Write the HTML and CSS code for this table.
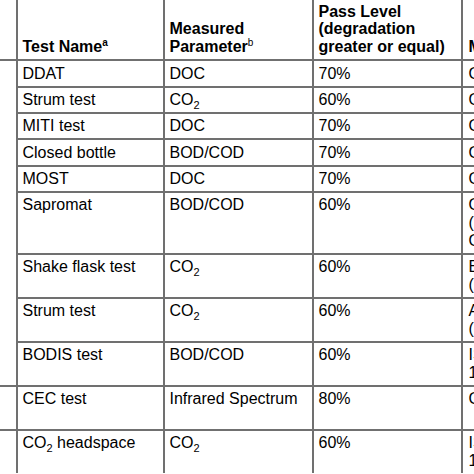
FILE: index.html
```html
<!DOCTYPE html>
<html>
<head>
<meta charset="utf-8">
<link rel="stylesheet" href="styles.css">
</head>
<body>
<div class="page">
  <div class="table">
    <div class="cell head"><div></div></div>
    <div class="cell head"><div>Test Name<sup class="sa">a</sup></div></div>
    <div class="cell head"><div>Measured<br>Parameter<sup class="sb">b</sup></div></div>
    <div class="cell head"><div>Pass Level<br>(degradation<br>greater or equal)</div></div>
    <div class="cell head last"><div>Method</div></div>

    <div class="cell group"></div>
    <div class="cell">DDAT</div>
    <div class="cell">DOC</div>
    <div class="cell">70%</div>
    <div class="cell last">OECD 301A</div>

    <div class="cell">Strum test</div>
    <div class="cell">CO<sub>2</sub></div>
    <div class="cell">60%</div>
    <div class="cell last">OECD 301B</div>

    <div class="cell">MITI test</div>
    <div class="cell">DOC</div>
    <div class="cell">70%</div>
    <div class="cell last">OECD 301C</div>

    <div class="cell">Closed bottle</div>
    <div class="cell">BOD/COD</div>
    <div class="cell">70%</div>
    <div class="cell last">OECD 301D</div>

    <div class="cell">MOST</div>
    <div class="cell">DOC</div>
    <div class="cell">70%</div>
    <div class="cell last">OECD 301E</div>

    <div class="cell">Sapromat</div>
    <div class="cell">BOD/COD</div>
    <div class="cell">60%</div>
    <div class="cell last">OECD 301F<br>(respirometry)<br>OECD 302C</div>

    <div class="cell">Shake flask test</div>
    <div class="cell">CO<sub>2</sub></div>
    <div class="cell">60%</div>
    <div class="cell last">EPA<br>(OPPTS 835.3110)</div>

    <div class="cell">Strum test</div>
    <div class="cell">CO<sub>2</sub></div>
    <div class="cell">60%</div>
    <div class="cell last">ASTM<br>(D5864)</div>

    <div class="cell">BODIS test</div>
    <div class="cell">BOD/COD</div>
    <div class="cell">60%</div>
    <div class="cell last">ISO<br>10708</div>

    <div class="cell two"></div>
    <div class="cell">CEC test</div>
    <div class="cell">Infrared Spectrum</div>
    <div class="cell">80%</div>
    <div class="cell last">CEC L-33-A-93</div>

    <div class="cell two"></div>
    <div class="cell">CO<sub>2</sub> headspace</div>
    <div class="cell">CO<sub>2</sub></div>
    <div class="cell">60%</div>
    <div class="cell last">ISO<br>14593</div>
  </div>
</div>
</body>
</html>
```

FILE: styles.css
```css
html, body {
  margin: 0;
  padding: 0;
  background: #ffffff;
  overflow: hidden;
}

.page {
  width: 474px;
  height: 474px;
  overflow: hidden;
  background: #ffffff;
}

.table {
  display: grid;
  grid-template-columns: 116px 145px 147px 147px 200px;
  gap: 2px;
  width: max-content;
  margin-left: -100px;
  background: #707070;
  font-family: "Liberation Sans", Arial, sans-serif;
  font-size: 16px;
  line-height: 17.8px;
  color: #000000;
}

.cell {
  background: #ffffff;
  padding: 3.2px 4.5px 3.3px 4.5px;
  white-space: nowrap;
}

.head {
  display: flex;
  flex-direction: column;
  justify-content: flex-end;
  font-weight: bold;
  padding: 2px 4.5px 3.6px 4.5px;
  min-height: 53.9px;
}

.cell.last {
  padding-left: 5.5px;
}

.group {
  grid-row: span 9;
}

.two {
  min-height: 35.6px;
}

sub {
  font-size: 11px;
  line-height: 0;
  vertical-align: -4px;
}

sup {
  font-size: 10px;
  line-height: 0;
  vertical-align: 6px;
}

.sb {
  font-weight: normal;
}
```
